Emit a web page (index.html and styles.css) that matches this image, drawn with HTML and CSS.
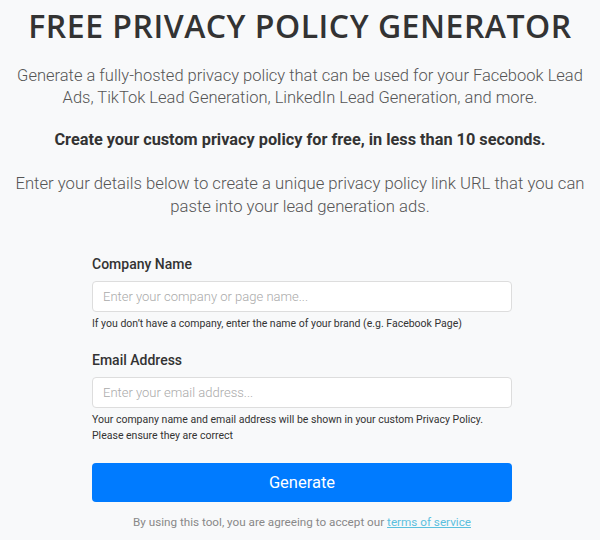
FILE: index.html
```html
<!DOCTYPE html>
<html>
<head>
<meta charset="utf-8">
<link rel="stylesheet" href="styles.css">
</head>
<body>
<div class="page">
  <h1 class="title">FREE PRIVACY POLICY GENERATOR</h1>
  <p class="lead">Generate a fully-hosted privacy policy that can be used for your Facebook Lead Ads, TikTok Lead Generation, LinkedIn Lead Generation, and more.</p>
  <p class="strong">Create your custom privacy policy for free, in less than 10 seconds.</p>
  <p class="intro">Enter your details below to create a unique privacy policy link URL that you can paste into your lead generation ads.</p>
  <form class="form">
    <div class="field">
      <label class="label">Company Name</label>
      <input class="input" type="text" placeholder="Enter your company or page name...">
      <small class="help">If you don’t have a company, enter the name of your brand (e.g. Facebook Page)</small>
    </div>
    <div class="field">
      <label class="label">Email Address</label>
      <input class="input" type="text" placeholder="Enter your email address...">
      <small class="help">Your company name and email address will be shown in your custom Privacy Policy.<br>Please ensure they are correct</small>
    </div>
    <button class="btn" type="button">Generate</button>
    <p class="terms">By using this tool, you are agreeing to accept our <a href="#">terms of service</a></p>
  </form>
</div>
</body>
</html>
```
FILE: styles.css
```css
html, body { margin: 0; padding: 0; background: #f8f9fa; }
body { font-family: Roboto, "Liberation Sans", sans-serif; color: #333; }
.page { display: flex; flex-direction: column; align-items: center; padding-top: 6px; }
.title {
  margin: 0;
  font-family: "Open Sans", "DejaVu Sans", sans-serif;
  font-weight: 600;
  font-size: 32px;
  line-height: 40px;
  color: #333;
  letter-spacing: 0.5px;
  white-space: nowrap;
}
.lead {
  margin: 19px 0 0;
  width: 590px;
  text-align: center;
  font-size: 16.5px;
  line-height: 22px;
  font-weight: 300;
  color: #555;
}
.strong {
  margin: 19px 0 0;
  text-align: center;
  font-size: 16.3px;
  line-height: 24px;
  font-weight: 700;
  color: #333;
}
.intro {
  margin: 20px 0 0;
  width: 590px;
  text-align: center;
  font-size: 16.7px;
  line-height: 23px;
  font-weight: 300;
  color: #555;
}
.form { width: 420px; margin: 36px 0 0 4px; display: flex; flex-direction: column; }
.field { display: flex; flex-direction: column; margin-bottom: 18px; }
.label { font-size: 14px; font-weight: 500; line-height: 20px; color: #333; margin-bottom: 7px; }
.input {
  box-sizing: border-box;
  height: 31px;
  border: 1px solid #ddd;
  border-radius: 4px;
  background: #fff;
  padding: 0 10px;
  font-family: Roboto, sans-serif;
  font-size: 13px;
  color: #333;
}
.input::placeholder { color: #aaa; font-weight: 300; }
.help { font-size: 10.5px; line-height: 16px; color: #333; margin-top: 4px; }
.btn {
  height: 39px;
  border: 0;
  border-radius: 4px;
  background: #007bff;
  color: #fff;
  font-family: Roboto, sans-serif;
  font-size: 16.5px;
  margin-top: 1px;
}
.terms { margin: 13px 0 0; text-align: center; font-size: 11.7px; color: #888; }
.terms a { color: #5bc0de; }
```
